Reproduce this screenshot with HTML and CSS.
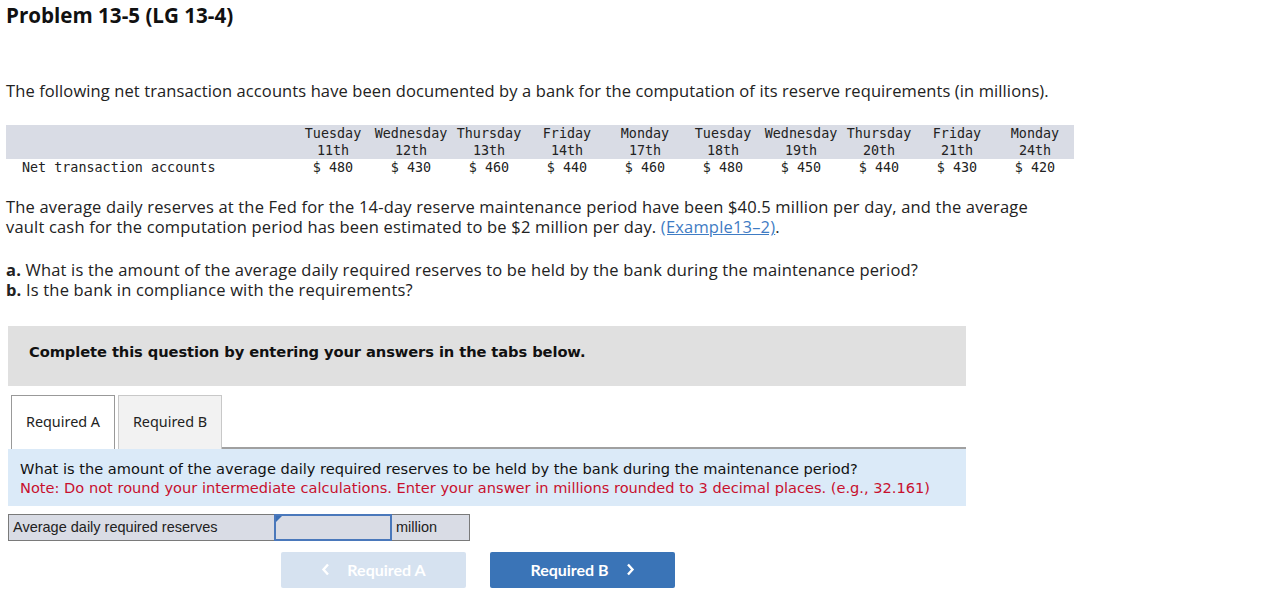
FILE: index.html
```html
<!DOCTYPE html>
<html>
<head>
<meta charset="utf-8">
<link rel="stylesheet" href="styles.css">
</head>
<body>
<div class="page">
  <h1 class="title">Problem 13-5 (LG 13-4)</h1>
  <p class="intro">The following net transaction accounts have been documented by a bank for the computation of its reserve requirements (in millions).</p>

  <table class="data">
    <thead>
      <tr>
        <th class="lbl"></th>
        <th>Tuesday<br>11th</th>
        <th>Wednesday<br>12th</th>
        <th>Thursday<br>13th</th>
        <th>Friday<br>14th</th>
        <th>Monday<br>17th</th>
        <th>Tuesday<br>18th</th>
        <th>Wednesday<br>19th</th>
        <th>Thursday<br>20th</th>
        <th>Friday<br>21th</th>
        <th>Monday<br>24th</th>
      </tr>
    </thead>
    <tbody>
      <tr>
        <td class="lbl">Net transaction accounts</td>
        <td>$ 480</td>
        <td>$ 430</td>
        <td>$ 460</td>
        <td>$ 440</td>
        <td>$ 460</td>
        <td>$ 480</td>
        <td>$ 450</td>
        <td>$ 440</td>
        <td>$ 430</td>
        <td>$ 420</td>
      </tr>
    </tbody>
  </table>

  <p class="para">The average daily reserves at the Fed for the 14-day reserve maintenance period have been $40.5 million per day, and the average vault cash for the computation period has been estimated to be $2 million per day. <a class="ex" href="#">(Example13–2)</a>.</p>

  <p class="para qs"><b>a.</b> What is the amount of the average daily required reserves to be held by the bank during the maintenance period?<br><b>b.</b> Is the bank in compliance with the requirements?</p>

  <div class="complete">Complete this question by entering your answers in the tabs below.</div>

  <div class="tabs">
    <div class="tab active">Required A</div>
    <div class="tab">Required B</div>
    <div class="tabline"></div>
  </div>

  <div class="qbox">
    <div>What is the amount of the average daily required reserves to be held by the bank during the maintenance period?</div>
    <div class="note">Note: Do not round your intermediate calculations. Enter your answer in millions rounded to 3 decimal places. (e.g., 32.161)</div>
  </div>

  <div class="answer">
    <div class="alabel">Average daily required reserves</div>
    <div class="ainput"><span class="corner"></span></div>
    <div class="aunit">million</div>
  </div>

  <div class="nav">
    <div class="btn prev"><svg class="chev left" width="9" height="13" viewBox="0 0 9 13"><polyline points="7,1.5 2.5,6.5 7,11.5" fill="none" stroke="#fff" stroke-width="2.4"/></svg><span>Required A</span></div>
    <div class="btn next"><span>Required B</span><svg class="chev right" width="9" height="13" viewBox="0 0 9 13"><polyline points="2,1.5 6.5,6.5 2,11.5" fill="none" stroke="#fff" stroke-width="2.4"/></svg></div>
  </div>
</div>
</body>
</html>
```

FILE: styles.css
```css
html, body { margin: 0; padding: 0; background: #fff; }
body { font-family: "Open Sans", "Liberation Sans", sans-serif; color: #222; }
.page { padding-left: 6px; }

.title {
  margin: 0;
  padding-top: 3px;
  font-size: 20.6px;
  line-height: 24px;
  font-weight: 700;
  color: #111;
}

.intro {
  margin: 54px 0 0 0;
  font-size: 16.5px;
  line-height: 20px;
  letter-spacing: 0.1px;
  color: #222;
}

.data {
  margin-top: 24px;
  border-collapse: collapse;
  font-family: "DejaVu Sans Mono", monospace;
  font-size: 13.4px;
  color: #222;
  width: 1068px;
}
.data thead tr { background: #d9dce5; }
.data th {
  font-weight: normal;
  line-height: 17px;
  padding: 0;
  text-align: center;
  width: 78px;
}
.data th.lbl { width: auto; }
.data td {
  line-height: 17px;
  padding: 0;
  text-align: center;
}
.data td.lbl { text-align: left; padding-left: 16px; }

.para {
  margin: 21px 0 0 0;
  font-size: 16.5px;
  line-height: 20px;
  letter-spacing: 0.18px;
  color: #222;
  width: 1050px;
}
.qs { margin-top: 23px; }
.ex { color: #3f7cc4; text-decoration: underline; }

.complete {
  margin: 26px 0 0 2px;
  width: 937px;
  height: 60px;
  padding-left: 21px;
  background: #e0e0e0;
  font-family: "DejaVu Sans", sans-serif;
  font-weight: 700;
  font-size: 14.7px;
  line-height: 52px;
  color: #111;
  letter-spacing: -0.1px;
}

.tabs {
  display: flex;
  align-items: flex-end;
  margin: 9px 0 0 2px;
  width: 958px;
  height: 54px;
}
.tab {
  box-sizing: border-box;
  width: 104px;
  height: 54px;
  border: 1px solid #c8c8c8;
  border-bottom: none;
  background: #f2f2f2;
  font-family: "Noto Sans", sans-serif;
  font-size: 14.4px;
  line-height: 52px;
  text-align: center;
  color: #222;
  margin-right: 3px;
}
.tab.active {
  background: #fff;
  border-color: #999;
  margin-left: 3px;
}
.tabline { flex: 1; height: 0; border-bottom: 2px solid #a0a0a0; margin-left: -3px; }

.qbox {
  margin-left: 2px;
  width: 946px;
  padding: 10px 0 9px 12px;
  background: #dbeaf8;
  font-family: "DejaVu Sans", sans-serif;
  font-size: 14.6px;
  line-height: 19px;
  color: #111;
}
.note { color: #c8102e; }

.answer {
  display: flex;
  margin: 8px 0 0 2px;
  width: 462px;
  height: 27px;
  box-sizing: border-box;
  border: 1px solid #7a7a7a;
  background: #d9dce5;
  font-family: "Liberation Sans", Arial, sans-serif;
  font-size: 14.5px;
  color: #222;
}
.alabel { width: 265px; line-height: 25px; padding-left: 4px; box-sizing: border-box; }
.ainput {
  position: relative;
  width: 118px;
  box-sizing: border-box;
  border: 2px solid #4a78bb;
  margin: -1px 0;
  height: 27px;
  background: #d9dce5;
}
.corner {
  position: absolute;
  left: 0; top: 0;
  width: 0; height: 0;
  border-top: 6px solid #3b6fb5;
  border-right: 6px solid transparent;
}
.aunit { line-height: 25px; padding-left: 4px; }

.nav {
  display: flex;
  gap: 24px;
  margin: 11px 0 0 275px;
}
.btn {
  box-sizing: border-box;
  width: 185px;
  height: 36px;
  border-radius: 2px;
  color: #fff;
  font-family: "Lato", sans-serif;
  font-weight: 700;
  font-size: 16px;
  display: flex;
  align-items: center;
  justify-content: center;
  padding-bottom: 1px;
}
.prev { background: #d6e2f0; }
.next { background: #3a74b7; }
.chev.left { margin-right: 17px; }
.chev.right { margin-left: 17px; }
```
